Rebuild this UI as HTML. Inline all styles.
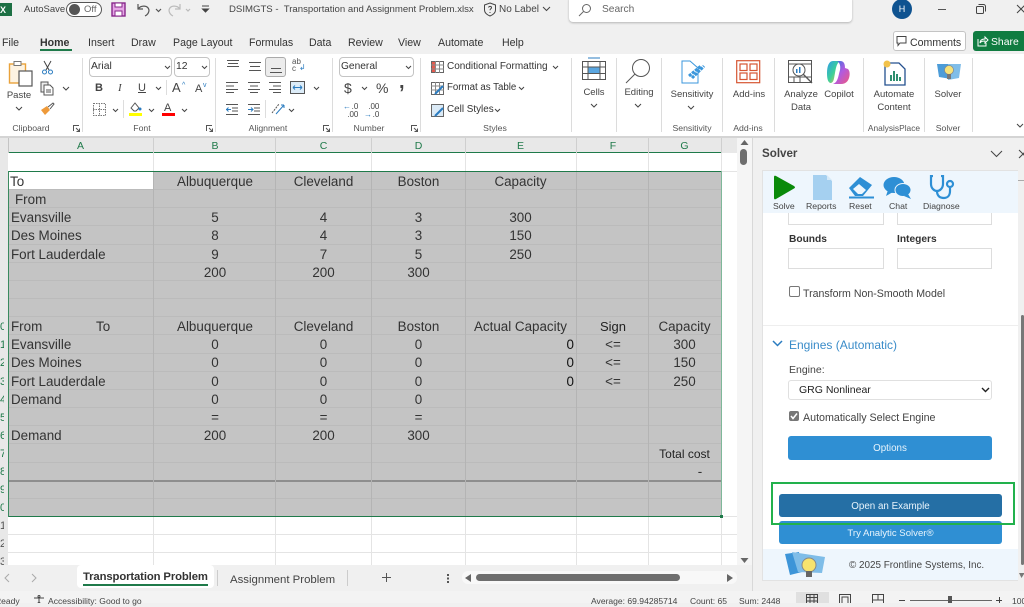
<!DOCTYPE html>
<html><head><meta charset="utf-8"><style>
html,body{margin:0;padding:0}
body{width:1024px;height:603px;overflow:hidden;position:relative;background:#f0f0f0;font-family:"Liberation Sans",sans-serif;color:#3a3a3a}
div,span,svg{position:absolute}
.t{white-space:nowrap;line-height:14px}
.rb{font-size:9.5px;color:#444;text-align:center;white-space:nowrap;line-height:12px}
.gl{font-size:8.7px;color:#555;text-align:center;white-space:nowrap;line-height:11px;top:123px}
.tab{font-size:10.6px;top:36px;line-height:14px;white-space:nowrap;color:#333}
.sep{top:58px;height:74px;width:1px;background:#dcdcdc}
.h{height:1px;left:8px;width:729px;background:#e4e4e4}
.v{top:153px;height:412px;width:1px;background:#e4e4e4}
.hg{height:1px;left:8px;width:713px;background:#bbb}
.vg{top:171px;height:345px;width:1px;background:#b4b4b4}
.r{left:0;width:737px;height:18px;line-height:18px;font-size:13.4px;color:#333;white-space:nowrap}
.r span{top:1px;text-align:center;height:18px}
.A{left:11px;text-align:left!important}
.B{left:154px;width:122px}.C{left:275px;width:97px}.D{left:372px;width:93px}.E{left:465px;width:111px}.F{left:577px;width:72px}.G{left:648px;width:73px}
.n{left:0;width:3.500px;height:18px;line-height:18px;margin-top:1px;font-size:11px;text-align:right;color:#1f7a4a;overflow:hidden}
.in{border:1px solid #ddd;background:#fff;box-sizing:border-box}
.st{top:595px;font-size:8.55px;color:#444;white-space:nowrap;line-height:12px}
</style></head><body>

<!-- Title bar -->
<svg style="left:0;top:3px" width="12" height="13"><rect x="0" y="0" width="12" height="13" fill="#1d7044"/><text x="0" y="10" font-size="9" font-weight="bold" fill="#fff" font-family="Liberation Sans">X</text></svg>
<div class="t" style="left:24px;top:3px;font-size:9.500px;color:#444">AutoSave</div>
<div style="left:66px;top:2px;width:36px;height:15px;border:1px solid #555;border-radius:9px;background:#fff;box-sizing:border-box"></div>
<div style="left:69px;top:4px;width:11px;height:11px;border-radius:50%;background:#555"></div>
<div class="t" style="left:84px;top:3px;font-size:9.500px;color:#666">Off</div>
<svg style="left:111px;top:2px" width="15" height="15"><rect x="1" y="1" width="13" height="13" fill="#e6a6e6" stroke="#86278a" stroke-width="1.400"/><rect x="4" y="1" width="7" height="4" fill="#fff" stroke="#86278a"/><rect x="4" y="9" width="7" height="5" fill="#fff" stroke="#86278a"/></svg>
<svg style="left:136px;top:2px" width="26" height="15" fill="none" stroke="#555" stroke-width="1.200"><path d="M2 2v5h5M2 7c3-4 10-4 11 1 0 3-2 5-4 6"/><path d="M20 7l2.500 2.500 2.500-2.500"/></svg>
<svg style="left:167px;top:2px" width="26" height="15" fill="none" stroke="#bbb" stroke-width="1.200"><path d="M13 2v5h-5M13 7c-3-4-10-4-11 1 0 3 2 5 4 6"/><path d="M19 7l2 2 2-2"/></svg>
<svg style="left:201px;top:5px" width="9" height="9" fill="none" stroke="#444"><path d="M1 1h7"/><path d="M1.500 4h6l-3 3z" fill="#444"/></svg>
<div class="t" style="left:229px;top:3px;font-size:9.600px;color:#444;white-space:pre">DSIMGTS -  Transportation and Assignment Problem.xlsx</div>
<svg style="left:483px;top:2px" width="14" height="15" fill="none" stroke="#444"><path d="M7 1l5.500 2v5c0 3-3 5-5.500 6-2.500-1-5.500-3-5.500-6V3z"/><path d="M5.500 5.500c.5-1.500 3-1.500 3 .2 0 1-1.500 1.200-1.500 2.500M7 10v1"/></svg>
<div class="t" style="left:499px;top:3px;font-size:10px;color:#444">No Label</div>
<svg style="left:542px;top:6px" width="9" height="7" fill="none" stroke="#444"><path d="M1 1l3.500 3.500L8 1"/></svg>
<div style="left:569px;top:-4px;width:283px;height:26px;background:#fff;border-radius:4px;box-shadow:0 1px 2px rgba(0,0,0,.25)"></div>
<svg style="left:578px;top:3px" width="14" height="14" fill="none" stroke="#666"><circle cx="8.500" cy="5.500" r="4"/><path d="M5.500 8.500l-4.500 4.500"/></svg>
<div class="t" style="left:602px;top:3px;font-size:10.200px;color:#666">Search</div>
<div style="left:892px;top:-1px;width:20px;height:20px;border-radius:50%;background:#0f5390;color:#fff;font-size:9px;text-align:center;line-height:20px">H</div>
<div style="left:938px;top:9px;width:8px;height:1px;background:#555"></div>
<svg style="left:976px;top:4px" width="10" height="10" fill="none" stroke="#444"><rect x=".5" y="2.500" width="7" height="7" rx="1"/><path d="M2.500 .5h5a2 2 0 0 1 2 2v5"/></svg>
<svg style="left:1016px;top:4px" width="8" height="10" fill="none" stroke="#444"><path d="M1 1l8 8M9 1l-8 8"/></svg>

<!-- Tabs -->
<div class="tab" style="left:2px">File</div>
<div class="tab" style="left:40px;font-weight:bold;color:#333">Home</div>
<div style="left:40px;top:49px;width:32px;height:2px;background:#1f7a4a"></div>
<div class="tab" style="left:88px">Insert</div>
<div class="tab" style="left:131px">Draw</div>
<div class="tab" style="left:173px">Page Layout</div>
<div class="tab" style="left:249px">Formulas</div>
<div class="tab" style="left:309px">Data</div>
<div class="tab" style="left:348px">Review</div>
<div class="tab" style="left:398px">View</div>
<div class="tab" style="left:438px">Automate</div>
<div class="tab" style="left:502px">Help</div>
<div style="left:893px;top:31px;width:73px;height:20px;background:#fff;border:1px solid #c4c4c4;border-radius:3px;box-sizing:border-box"></div>
<svg style="left:896px;top:35px" width="12" height="12" fill="none" stroke="#444"><path d="M1 1.500h9v6.500h-6l-2 2.500v-2.500h-1z"/></svg>
<div class="t" style="left:910px;top:36px;font-size:10.600px;color:#333">Comments</div>
<div style="left:973px;top:31px;width:60px;height:20px;background:#107c41;border-radius:3px"></div>
<svg style="left:977px;top:35px" width="12" height="12" fill="none" stroke="#fff"><path d="M1 4v7h8V8M3 8c0-3 2-4 5-4V2l3 3-3 3V6C6 6 4 6 3 8z"/></svg>
<div class="t" style="left:991px;top:36px;font-size:10.400px;color:#fff">Share</div>

<!-- Ribbon -->
<div style="left:0;top:54px;width:1024px;height:82px;background:#fff"></div>
<div style="left:0;top:136px;width:1024px;height:2px;background:#d4d4d4"></div>
<div class="sep" style="left:82px"></div><div class="sep" style="left:215px"></div><div class="sep" style="left:332px"></div><div class="sep" style="left:420px"></div><div class="sep" style="left:571px"></div><div class="sep" style="left:616px"></div><div class="sep" style="left:661px"></div><div class="sep" style="left:722px"></div><div class="sep" style="left:774px"></div><div class="sep" style="left:863px"></div><div class="sep" style="left:924px"></div><div class="sep" style="left:972px"></div>

<!-- Clipboard -->
<svg style="left:8px;top:60px" width="26" height="28"><rect x="1.500" y="4" width="16" height="19" fill="#fdf3e2" stroke="#e9a23b" stroke-width="1.400"/><rect x="6" y="1.500" width="7" height="4" fill="#fff" stroke="#777"/><rect x="11" y="11" width="13" height="15" fill="#fff" stroke="#555" stroke-width="1.200"/></svg>
<div class="rb" style="left:4px;top:90px;width:30px">Paste</div>
<svg style="left:15px;top:106px" width="8" height="6" fill="none" stroke="#444"><path d="M1 1l3 3 3-3"/></svg>
<svg style="left:41px;top:60px" width="13" height="15" fill="none" stroke="#444"><path d="M3 1l5 9M10 1L5 10"/><circle cx="3.500" cy="12" r="2" stroke="#2b7cc0"/><circle cx="9.500" cy="12" r="2" stroke="#2b7cc0"/></svg>
<svg style="left:40px;top:81px" width="15" height="15" fill="none" stroke="#555"><rect x="1" y="1" width="7" height="10" fill="#eee"/><path d="M4 4h6l3 3v7H4z" fill="#fff"/><path d="M6 9h5M6 11h5"/></svg>
<svg style="left:62px;top:86px" width="8" height="6" fill="none" stroke="#444"><path d="M1 1l3 3 3-3"/></svg>
<svg style="left:40px;top:102px" width="15" height="14"><path d="M1 8l6-4 3 4-5 5z" fill="#ee9a3a"/><path d="M8 5l5-4 1 1-4 5" fill="none" stroke="#555"/></svg>
<div class="gl" style="left:8px;width:46px">Clipboard</div>
<svg style="left:73px;top:125px" width="7" height="7" fill="none" stroke="#555"><path d="M.5 6V.5H6M3 3l3.500 3.500M6.500 3.500v3h-3"/></svg>

<!-- Font -->
<div style="left:89px;top:57px;width:83px;height:20px;border:1px solid #c4c4c4;border-radius:4px;box-sizing:border-box"></div>
<div class="t" style="left:91px;top:60px;font-size:10.400px;color:#333">Arial</div>
<svg style="left:164px;top:65px" width="7" height="5" fill="none" stroke="#444"><path d="M1 1l2.500 2.500L6 1"/></svg>
<div style="left:174px;top:57px;width:36px;height:20px;border:1px solid #c4c4c4;border-radius:4px;box-sizing:border-box"></div>
<div class="t" style="left:176px;top:60px;font-size:10.400px;color:#333">12</div>
<svg style="left:201px;top:65px" width="7" height="5" fill="none" stroke="#444"><path d="M1 1l2.500 2.500L6 1"/></svg>
<div class="t" style="left:95px;top:81px;font-size:11px;font-weight:bold;color:#444">B</div>
<div class="t" style="left:118px;top:81px;font-size:11px;font-family:'Liberation Serif',serif;font-style:italic;color:#444">I</div>
<div class="t" style="left:138px;top:81px;font-size:11px;text-decoration:underline;color:#444">U</div>
<svg style="left:155px;top:86px" width="7" height="5" fill="none" stroke="#444"><path d="M1 1l2.500 2.500L6 1"/></svg>
<div style="left:166px;top:80px;width:1px;height:15px;background:#ddd"></div>
<div class="t" style="left:172px;top:81px;font-size:13px;color:#444">A</div><div class="t" style="left:182px;top:79px;font-size:7px;color:#2b7cc0">^</div>
<div class="t" style="left:195px;top:82px;font-size:11px;color:#444">A</div><div class="t" style="left:203px;top:79px;font-size:7px;color:#2b7cc0">v</div>
<svg style="left:93px;top:103px" width="13" height="13" fill="none" stroke="#777" stroke-dasharray="1.500 1"><rect x=".5" y=".5" width="12" height="12"/><path d="M6.500 0v13M0 6.500h13"/></svg>
<svg style="left:112px;top:108px" width="7" height="5" fill="none" stroke="#444"><path d="M1 1l2.500 2.500L6 1"/></svg>
<div style="left:123px;top:100px;width:1px;height:18px;background:#ddd"></div>
<svg style="left:129px;top:102px" width="13" height="10" fill="none" stroke="#555"><path d="M2 6l4-5 4 5-3 3H5z"/><circle cx="11" cy="7" r="1.500" fill="#2b7cc0" stroke="none"/></svg>
<div style="left:129px;top:113px;width:13px;height:3px;background:#ffff00"></div>
<svg style="left:148px;top:108px" width="7" height="5" fill="none" stroke="#444"><path d="M1 1l2.500 2.500L6 1"/></svg>
<div class="t" style="left:164px;top:101px;font-size:11px;color:#444">A</div>
<div style="left:162px;top:113px;width:13px;height:3px;background:#f00"></div>
<svg style="left:181px;top:108px" width="7" height="5" fill="none" stroke="#444"><path d="M1 1l2.500 2.500L6 1"/></svg>
<div class="gl" style="left:122px;width:40px">Font</div>
<svg style="left:206px;top:125px" width="7" height="7" fill="none" stroke="#555"><path d="M.5 6V.5H6M3 3l3.500 3.500M6.500 3.500v3h-3"/></svg>

<!-- Alignment -->
<svg style="left:225px;top:58px" width="16" height="12" stroke="#555" fill="none"><path d="M2 2.500h12M3 5.500h10M2 8.500h12"/></svg>
<svg style="left:247px;top:60px" width="16" height="12" stroke="#555" fill="none"><path d="M2 2.500h12M3 6.500h10M2 10.500h12"/></svg>
<div style="left:265px;top:57px;width:21px;height:20px;background:#ececec;border:1px solid #aaa;border-radius:3px;box-sizing:border-box"></div>
<svg style="left:268px;top:64px" width="16" height="12" stroke="#555" fill="none"><path d="M3 4.500h10M2 8.500h12"/></svg>
<div class="t" style="left:292px;top:58px;font-size:8px;line-height:7px;color:#555">ab<br>c<span style="left:7px;top:6px;color:#2b7cc0">&#8626;</span></div>
<svg style="left:226px;top:80px" width="13" height="14" stroke="#555" fill="none"><path d="M0 2.500h12M0 6h8M0 9.500h12M0 12.500h8"/></svg>
<svg style="left:248px;top:80px" width="13" height="14" stroke="#555" fill="none"><path d="M0 2.500h12M2 6h8M0 9.500h12M2 12.500h8"/></svg>
<svg style="left:269px;top:80px" width="13" height="14" stroke="#555" fill="none"><path d="M0 2.500h12M4 6h8M0 9.500h12M4 12.500h8"/></svg>
<svg style="left:290px;top:81px" width="15" height="13"><rect x=".5" y=".5" width="14" height="12" fill="#dcecf8" stroke="#555"/><path d="M3 6.500h9M3 6.500l2-2M3 6.500l2 2M12 6.500l-2-2M12 6.500l-2 2" stroke="#2b7cc0" fill="none"/></svg>
<svg style="left:313px;top:86px" width="7" height="5" fill="none" stroke="#444"><path d="M1 1l2.500 2.500L6 1"/></svg>
<svg style="left:226px;top:103px" width="13" height="13" stroke="#555" fill="none"><path d="M0 1.500h12M6 5h6M6 8h6M0 11.500h12"/><path d="M5 6.500H0M2.500 4.500l-2 2 2 2" stroke="#2b7cc0"/></svg>
<svg style="left:248px;top:103px" width="13" height="13" stroke="#555" fill="none"><path d="M0 1.500h12M6 5h6M6 8h6M0 11.500h12"/><path d="M0 6.500h5M3 4.500l2 2-2 2" stroke="#2b7cc0"/></svg>
<div style="left:265px;top:100px;width:1px;height:18px;background:#ddd"></div>
<svg style="left:271px;top:102px" width="14" height="14" fill="none"><path d="M1 11l7-9" stroke="#555" stroke-dasharray="2 1"/><path d="M5 12L13 3M13 3h-3M13 3v3" stroke="#2b7cc0"/></svg>
<svg style="left:288px;top:108px" width="7" height="5" fill="none" stroke="#444"><path d="M1 1l2.500 2.500L6 1"/></svg>
<div class="gl" style="left:240px;width:56px">Alignment</div>
<svg style="left:323px;top:125px" width="7" height="7" fill="none" stroke="#555"><path d="M.5 6V.5H6M3 3l3.500 3.500M6.500 3.500v3h-3"/></svg>

<!-- Number -->
<div style="left:339px;top:57px;width:75px;height:20px;border:1px solid #c4c4c4;border-radius:4px;box-sizing:border-box"></div>
<div class="t" style="left:341px;top:60px;font-size:10.200px;color:#333">General</div>
<svg style="left:405px;top:65px" width="7" height="5" fill="none" stroke="#444"><path d="M1 1l2.500 2.500L6 1"/></svg>
<div class="t" style="left:344px;top:81px;font-size:14px;color:#444">$</div>
<svg style="left:361px;top:86px" width="7" height="5" fill="none" stroke="#444"><path d="M1 1l2.500 2.500L6 1"/></svg>
<div class="t" style="left:376px;top:81px;font-size:14px;color:#444">%</div>
<div class="t" style="left:399px;top:75px;font-size:20px;font-weight:bold;color:#444">,</div>
<div class="t" style="left:345px;top:103px;font-size:8px;line-height:8px;color:#444;white-space:pre"><span style="color:#2b7cc0;left:-2px">&#8592;</span>   .0
 .00</div>
<div class="t" style="left:366px;top:103px;font-size:8px;line-height:8px;color:#444;white-space:pre"> .00
<span style="color:#2b7cc0;left:-2px">&#8594;</span>   .0</div>
<div class="gl" style="left:349px;width:40px">Number</div>
<svg style="left:411px;top:125px" width="7" height="7" fill="none" stroke="#555"><path d="M.5 6V.5H6M3 3l3.500 3.500M6.500 3.500v3h-3"/></svg>

<!-- Styles -->
<svg style="left:431px;top:61px" width="13" height="12"><rect x=".5" y=".5" width="12" height="11" fill="#fff" stroke="#666"/><rect x="1" y="1" width="3" height="10" fill="#e35b4f"/><path d="M0 4h13M0 8h13M4.500 0v12M8.500 0v12" stroke="#888"/></svg>
<div class="t" style="left:447px;top:60px;font-size:10px;color:#333">Conditional Formatting</div>
<svg style="left:552px;top:65px" width="7" height="5" fill="none" stroke="#444"><path d="M1 1l2.500 2.500L6 1"/></svg>
<svg style="left:431px;top:82px" width="13" height="13"><rect x=".5" y=".5" width="12" height="12" fill="#fff" stroke="#666"/><path d="M0 4h13M0 8h13M4.500 0v12M8.500 0v12" stroke="#888"/><path d="M4 12l8-8" stroke="#2b7cc0" stroke-width="2"/></svg>
<div class="t" style="left:447px;top:81px;font-size:9.700px;color:#333">Format as Table</div>
<svg style="left:518px;top:86px" width="7" height="5" fill="none" stroke="#444"><path d="M1 1l2.500 2.500L6 1"/></svg>
<svg style="left:431px;top:104px" width="13" height="13"><rect x=".5" y=".5" width="12" height="12" fill="#dbeaf6" stroke="#666"/><path d="M4 12l8-8" stroke="#2b7cc0" stroke-width="2"/></svg>
<div class="t" style="left:447px;top:103px;font-size:9.900px;color:#333">Cell Styles</div>
<svg style="left:494px;top:108px" width="7" height="5" fill="none" stroke="#444"><path d="M1 1l2.500 2.500L6 1"/></svg>
<div class="gl" style="left:475px;width:40px">Styles</div>

<!-- Cells etc -->
<svg style="left:582px;top:57px" width="24" height="24" fill="none" stroke="#555"><path d="M6 1h12" stroke="#2b7cc0"/><rect x=".5" y="4.500" width="23" height="18"/><rect x="6" y="10" width="12" height="7" fill="#5aa6e0" stroke="none"/><path d="M0 10h24M0 16.500h24M6 4v19M18 4v19"/></svg>
<div class="rb" style="left:576px;top:87px;width:36px">Cells</div>
<svg style="left:590px;top:103px" width="8" height="6" fill="none" stroke="#444"><path d="M1 1l3 3 3-3"/></svg>
<svg style="left:625px;top:58px" width="27" height="26" fill="none" stroke="#555"><circle cx="16" cy="10" r="8.500"/><path d="M10 16L1 25"/></svg>
<div class="rb" style="left:620px;top:87px;width:38px">Editing</div>
<svg style="left:634px;top:103px" width="8" height="6" fill="none" stroke="#444"><path d="M1 1l3 3 3-3"/></svg>
<svg style="left:681px;top:59px" width="25" height="25" fill="none"><path d="M1 2h8l8 7v15H1z" fill="#fff" stroke="#3b97dc"/><path d="M8 17l12-10M11 19l12-12" stroke="#3b97dc" stroke-width="3" stroke-dasharray="3 1"/></svg>
<div class="rb" style="left:668px;top:89px;width:48px">Sensitivity</div>
<svg style="left:687px;top:105px" width="8" height="6" fill="none" stroke="#444"><path d="M1 1l3 3 3-3"/></svg>
<div class="gl" style="left:668px;width:48px">Sensitivity</div>
<svg style="left:736px;top:60px" width="25" height="24" fill="none" stroke="#d65532" stroke-width="1.200"><rect x=".7" y=".7" width="23" height="22"/><rect x="4" y="4" width="7" height="6.500"/><rect x="14" y="4" width="7" height="6.500"/><rect x="4" y="13" width="7" height="6.500"/><rect x="14" y="13" width="7" height="6.500"/></svg>
<div class="rb" style="left:725px;top:89px;width:48px">Add-ins</div>
<div class="gl" style="left:725px;width:46px">Add-ins</div>
<svg style="left:788px;top:60px" width="25" height="24" fill="none" stroke="#555"><rect x=".5" y=".5" width="23" height="22"/><path d="M0 4h24M0 17h24M6 17v6M12 17v6"/><circle cx="11" cy="10" r="6"/><rect x="8" y="9" width="1.500" height="4" fill="#2b7cc0" stroke="none"/><rect x="11" y="7" width="1.500" height="6" fill="#2b7cc0" stroke="none"/><path d="M15 14l9 9" stroke-width="1.300"/></svg>
<div class="rb" style="left:777px;top:88px;width:48px;line-height:13px">Analyze<br>Data</div>
<svg style="left:826px;top:60px" width="25" height="25"><defs><linearGradient id="g1" x1="0" y1="0" x2="1" y2="1"><stop offset="0" stop-color="#2f9ce8"/><stop offset=".5" stop-color="#3ccf9a"/><stop offset="1" stop-color="#f4c53f"/></linearGradient><linearGradient id="g2" x1="0" y1="0" x2="1" y2="1"><stop offset="0" stop-color="#1d78e0"/><stop offset=".5" stop-color="#b15be0"/><stop offset="1" stop-color="#f0587d"/></linearGradient></defs><path d="M7 1h7c-3 2-4 6-5 12-1 5-1 9-4 10-3 0-4-4-4-10 0-7 2-12 6-12z" fill="url(#g1)"/><path d="M11 1h3c4 0 5 3 5 7l3 1c2 2 2 6 1 9-1 3-3 6-8 6H7c5-2 5-7 7-14 1-5-1-8-3-9z" fill="url(#g2)"/></svg>
<div class="rb" style="left:820px;top:89px;width:38px">Copilot</div>
<svg style="left:883px;top:59px" width="23" height="27" fill="none"><path d="M5 4h11l6 6v16H2V6" fill="#fff" stroke="#24508f" stroke-width="1.300"/><circle cx="4" cy="5" r="3.500" fill="#f2c24b"/><rect x="7" y="16" width="2" height="6" fill="#2f8f6f"/><rect x="10" y="12" width="2" height="10" fill="#2f8f6f"/><rect x="13" y="15" width="2" height="7" fill="#2f8f6f"/><rect x="16" y="18" width="2" height="4" fill="#2f8f6f"/></svg>
<div class="rb" style="left:868px;top:88px;width:52px;line-height:13px">Automate<br>Content</div>
<div class="gl" style="left:865px;width:58px;font-size:8.400px">AnalysisPlace</div>
<svg style="left:936px;top:62px" width="25" height="19"><path d="M1 2l14 0 0 15-12-2z" fill="#4c9cd8"/><path d="M12 2l13 0-2 14-11 2z" fill="#7fbde8"/><circle cx="13" cy="8" r="4.500" fill="#f5e27a" stroke="#888" stroke-width=".7"/><rect x="11" y="12" width="4" height="5" fill="#777"/></svg>
<div class="rb" style="left:930px;top:89px;width:36px">Solver</div>
<div class="gl" style="left:930px;width:36px">Solver</div>
<svg style="left:1016px;top:123px" width="8" height="6" fill="none" stroke="#444"><path d="M1 1l3 3 3-3"/></svg>

<!-- Sheet -->
<div style="left:0;top:138px;width:737px;height:427px;background:#fff"></div>
<div style="left:0;top:138px;width:737px;height:15px;background:#e8e8e8"></div>
<div style="left:0;top:138px;width:8px;height:427px;background:#e8e8e8"></div>
<div style="left:8px;top:152px;width:713px;height:1px;background:#1f7a4a"></div>
<div style="left:8px;top:138px;width:1px;height:15px;background:#c4c4c4"></div>
<div style="left:153px;top:138px;width:1px;height:15px;background:#cfcfcf"></div>
<div style="left:275px;top:138px;width:1px;height:15px;background:#cfcfcf"></div>
<div style="left:371px;top:138px;width:1px;height:15px;background:#cfcfcf"></div>
<div style="left:465px;top:138px;width:1px;height:15px;background:#cfcfcf"></div>
<div style="left:576px;top:138px;width:1px;height:15px;background:#cfcfcf"></div>
<div style="left:648px;top:138px;width:1px;height:15px;background:#cfcfcf"></div>
<div style="left:721px;top:138px;width:1px;height:15px;background:#cfcfcf"></div>
<div class="r" style="top:137px;height:16px;line-height:16px;font-size:10.500px;color:#1f7a4a"><span class="B" style="left:8px;width:145px">A</span><span class="B">B</span><span class="C">C</span><span class="D">D</span><span class="E">E</span><span class="F">F</span><span class="G">G</span></div>

<div class="h" style="top:171px"></div><div class="h" style="top:516px"></div><div class="h" style="top:534px"></div><div class="h" style="top:552px"></div>
<div class="v" style="left:153px"></div><div class="v" style="left:275px"></div><div class="v" style="left:371px"></div><div class="v" style="left:465px"></div><div class="v" style="left:576px"></div><div class="v" style="left:648px"></div><div class="v" style="left:721px"></div>

<!-- Selection -->
<div style="left:8px;top:171px;width:713px;height:345px;background:#c4c4c4"></div>
<div style="left:9px;top:172px;width:144px;height:17px;background:#fff"></div>
<div class="hg" style="top:189px"></div><div class="hg" style="top:207px"></div><div class="hg" style="top:225px"></div><div class="hg" style="top:244px"></div><div class="hg" style="top:262px"></div><div class="hg" style="top:280px"></div><div class="hg" style="top:298px"></div><div class="hg" style="top:316px"></div><div class="hg" style="top:334px"></div><div class="hg" style="top:353px"></div><div class="hg" style="top:371px"></div><div class="hg" style="top:389px"></div><div class="hg" style="top:407px"></div><div class="hg" style="top:425px"></div><div class="hg" style="top:443px"></div><div class="hg" style="top:462px"></div><div class="hg" style="top:498px"></div>
<div class="hg" style="top:480px;height:2px;background:#8e8e8e"></div>
<div class="vg" style="left:153px"></div><div class="vg" style="left:275px"></div><div class="vg" style="left:371px"></div><div class="vg" style="left:465px"></div><div class="vg" style="left:576px"></div><div class="vg" style="left:648px"></div>
<div style="left:8px;top:171px;width:714px;height:1px;background:#1f7a4a"></div>
<div style="left:8px;top:516px;width:714px;height:1px;background:#1f7a4a"></div>
<div style="left:8px;top:171px;width:1px;height:346px;background:#3a8a5f"></div>
<div style="left:721px;top:171px;width:1px;height:346px;background:#7fb89a"></div>
<div style="left:720px;top:515px;width:3px;height:3px;background:#1f7a4a"></div>

<div class="r" style="top:172px"><span class="A" style="left:10px">To</span><span class="B">Albuquerque</span><span class="C">Cleveland</span><span class="D">Boston</span><span class="E">Capacity</span></div>
<div class="r" style="top:190px"><span class="A" style="left:15px">From</span></div>
<div class="r" style="top:208px"><span class="A">Evansville</span><span class="B">5</span><span class="C">4</span><span class="D">3</span><span class="E">300</span></div>
<div class="r" style="top:226px"><span class="A">Des Moines</span><span class="B">8</span><span class="C">4</span><span class="D">3</span><span class="E">150</span></div>
<div class="r" style="top:245px"><span class="A">Fort Lauderdale</span><span class="B">9</span><span class="C">7</span><span class="D">5</span><span class="E">250</span></div>
<div class="r" style="top:263px"><span class="B">200</span><span class="C">200</span><span class="D">300</span></div>
<div class="r" style="top:317px"><span class="A">From</span><span class="A" style="left:96px">To</span><span class="B">Albuquerque</span><span class="C">Cleveland</span><span class="D">Boston</span><span class="E">Actual Capacity</span><span class="F" style="font-size:13px;color:#222">Sign</span><span class="G">Capacity</span></div>
<div class="r" style="top:335px"><span class="A">Evansville</span><span class="B">0</span><span class="C">0</span><span class="D">0</span><span class="E" style="text-align:right;width:109px;color:#111">0</span><span class="F">&lt;=</span><span class="G">300</span></div>
<div class="r" style="top:353px"><span class="A">Des Moines</span><span class="B">0</span><span class="C">0</span><span class="D">0</span><span class="E" style="text-align:right;width:109px;color:#111">0</span><span class="F">&lt;=</span><span class="G">150</span></div>
<div class="r" style="top:372px"><span class="A">Fort Lauderdale</span><span class="B">0</span><span class="C">0</span><span class="D">0</span><span class="E" style="text-align:right;width:109px;color:#111">0</span><span class="F">&lt;=</span><span class="G">250</span></div>
<div class="r" style="top:390px"><span class="A">Demand</span><span class="B">0</span><span class="C">0</span><span class="D">0</span></div>
<div class="r" style="top:408px"><span class="B">=</span><span class="C">=</span><span class="D">=</span></div>
<div class="r" style="top:426px"><span class="A">Demand</span><span class="B">200</span><span class="C">200</span><span class="D">300</span></div>
<div class="r" style="top:444px"><span class="G" style="font-size:12px;color:#222">Total cost</span></div>
<div class="r" style="top:462px"><span class="G" style="left:697px;width:6px">-</span></div>

<div class="n" style="top:317px">0</div><div class="n" style="top:335px">1</div><div class="n" style="top:353px">2</div><div class="n" style="top:372px">3</div><div class="n" style="top:390px">4</div><div class="n" style="top:408px">5</div><div class="n" style="top:426px">6</div><div class="n" style="top:444px">7</div><div class="n" style="top:462px">8</div><div class="n" style="top:480px">9</div><div class="n" style="top:498px">0</div><div class="n" style="top:516px;color:#555">1</div><div class="n" style="top:534px;color:#555">2</div><div class="n" style="top:552px;height:12px;color:#555">3</div>

<!-- V scrollbar -->
<div style="left:737px;top:138px;width:15px;height:427px;background:#f5f5f5"></div>
<svg style="left:740px;top:140px" width="9" height="6"><path d="M4.500 0l4 5h-8z" fill="#666"/></svg>
<div style="left:740px;top:149px;width:7px;height:16px;background:#6e6e6e;border-radius:4px"></div>
<svg style="left:740px;top:557px" width="9" height="6"><path d="M4.500 6l4-5h-8z" fill="#666"/></svg>

<!-- Sheet tabs -->
<div style="left:0;top:565px;width:752px;height:26px;background:#f0f0f0"></div>
<svg style="left:3px;top:572px" width="36" height="12" fill="none" stroke="#aaa"><path d="M6 2L2 6l4 4M29 2l4 4-4 4"/></svg>
<div style="left:77px;top:565px;width:137px;height:23px;background:#fff;border-radius:4px"></div>
<div class="t" style="left:83px;top:570px;font-size:11.300px;font-weight:bold;color:#333;letter-spacing:-.12px">Transportation Problem</div>
<div style="left:83px;top:584px;width:125px;height:2px;background:#1f7a4a"></div>
<div class="t" style="left:230px;top:573px;font-size:11.400px;color:#444">Assignment Problem</div>
<div style="left:347px;top:570px;width:1px;height:16px;background:#ccc"></div>
<div style="left:217px;top:570px;width:1px;height:16px;background:#ccc"></div>
<svg style="left:381px;top:572px" width="11" height="11" stroke="#555" fill="none"><path d="M5.500 1v9M1 5.500h9"/></svg>
<svg style="left:446px;top:573px" width="4" height="11" fill="#555"><rect x="1" y="1" width="2" height="2"/><rect x="1" y="4.500" width="2" height="2"/><rect x="1" y="8" width="2" height="2"/></svg>
<div style="left:462px;top:571px;width:275px;height:13px;background:#f8f8f8;border-radius:6px"></div>
<svg style="left:465px;top:574px" width="6" height="8"><path d="M0 4l6-4v8z" fill="#666"/></svg>
<div style="left:476px;top:574px;width:204px;height:7px;background:#6e6e6e;border-radius:4px"></div>
<svg style="left:727px;top:574px" width="6" height="8"><path d="M6 4L0 0v8z" fill="#666"/></svg>

<!-- Status -->
<div style="left:0;top:591px;width:1024px;height:12px;background:#f3f3f3"></div>
<div class="st" style="left:-5px">Ready</div>
<svg style="left:33px;top:595px" width="12" height="8" fill="none" stroke="#444"><circle cx="6" cy="1.500" r="1"/><path d="M1 3h10M6 3v4M6 7l-3 3M6 7l3 3"/></svg>
<div class="st" style="left:48px">Accessibility: Good to go</div>
<div class="st" style="left:591px">Average: 69.94285714</div>
<div class="st" style="left:690px">Count: 65</div>
<div class="st" style="left:739px">Sum: 2448</div>
<div style="left:796px;top:592px;width:33px;height:11px;background:#e0e0e0"></div>
<svg style="left:806px;top:594px" width="12" height="9" fill="none" stroke="#444"><rect x=".5" y=".5" width="11" height="10"/><path d="M0 3.500h12M0 7h12M4 0v11M8 0v11"/></svg>
<svg style="left:839px;top:594px" width="12" height="9" fill="none" stroke="#444"><rect x=".5" y=".5" width="11" height="10"/><rect x="3" y="3" width="6" height="8"/></svg>
<svg style="left:872px;top:594px" width="12" height="9" fill="none" stroke="#444"><rect x=".5" y=".5" width="11" height="10"/><path d="M6 0v6M0 6h12"/></svg>
<div style="left:899px;top:600px;width:6px;height:1px;background:#444"></div>
<div style="left:910px;top:600px;width:82px;height:1px;background:#666"></div>
<div style="left:948px;top:596px;width:4px;height:7px;background:#555"></div>
<div style="left:996px;top:600px;width:6px;height:1px;background:#444"></div><div style="left:998.500px;top:597px;width:1px;height:6px;background:#444"></div>
<div class="st" style="left:1012px">100%</div>

<!-- Solver panel -->
<div style="left:752px;top:138px;width:1px;height:453px;background:#d8d8d8"></div>
<div style="left:753px;top:138px;width:271px;height:453px;background:#f0f0f0"></div>
<div class="t" style="left:762px;top:147px;font-size:11.600px;font-weight:bold;color:#444">Solver</div>
<svg style="left:990px;top:150px" width="13" height="8" fill="none" stroke="#444"><path d="M1 1l5.500 5.500L12 1"/></svg>
<svg style="left:1018px;top:149px" width="6" height="10" fill="none" stroke="#444"><path d="M1 1l8 8M9 1l-8 8"/></svg>
<div style="left:762px;top:170px;width:256px;height:411px;background:#fff;border:solid #e2e2e2;border-width:1px 0 1px 1px;box-sizing:border-box"></div>
<div style="left:763px;top:171px;width:255px;height:42px;background:#eef6fd"></div>
<svg style="left:773px;top:175px" width="23" height="25"><path d="M1 2q0-2 2-1l18 10q2 1.500 0 2.500L3 24q-2 1-2-1z" fill="#0a8a0a"/></svg>
<div class="t" style="left:773px;top:199px;font-size:8.700px;color:#444">Solve</div>
<svg style="left:813px;top:175px" width="20" height="25"><path d="M0 0h13l6 6v19H0z" fill="#a5d0f0"/><path d="M14 0l5 5h-5z" fill="#d5e9f8"/></svg>
<div class="t" style="left:806px;top:199px;font-size:8.700px;color:#444">Reports</div>
<svg style="left:848px;top:176px" width="27" height="23"><path d="M1 12L12 1l12 8-9 11H7z" fill="#2e8fd5"/><path d="M5 13l5 5h4l4-4-7-6z" fill="#eef6fd"/><path d="M1 21.500h25" stroke="#2e8fd5" stroke-width="2"/></svg>
<div class="t" style="left:849px;top:199px;font-size:8.700px;color:#444">Reset</div>
<svg style="left:883px;top:176px" width="30" height="24"><ellipse cx="11" cy="9" rx="10.500" ry="8" fill="#2e8fd5"/><path d="M5 14l-2 6 7-4z" fill="#2e8fd5"/><ellipse cx="20" cy="14" rx="8" ry="6.500" fill="#2e8fd5" stroke="#eef6fd"/><path d="M25 18l3 5-7-3z" fill="#2e8fd5"/></svg>
<div class="t" style="left:889px;top:199px;font-size:8.700px;color:#444">Chat</div>
<svg style="left:929px;top:175px" width="27" height="25" fill="none" stroke="#2e8fd5" stroke-width="2.200"><path d="M4 1H2v8c0 4 3 7 6 7s6-3 6-7V1h-2"/><path d="M8 16c0 5 3 7 7 7s6-3 6-7v-3"/><circle cx="21" cy="9" r="3"/></svg>
<div class="t" style="left:923px;top:199px;font-size:8.700px;color:#444">Diagnose</div>

<div class="in" style="left:788px;top:213px;width:96px;height:12px;border-top:0"></div>
<div class="in" style="left:897px;top:213px;width:95px;height:12px;border-top:0"></div>
<div class="t" style="left:789px;top:233px;font-size:10.200px;font-weight:bold;color:#333">Bounds</div>
<div class="t" style="left:897px;top:233px;font-size:10.200px;font-weight:bold;color:#333">Integers</div>
<div class="in" style="left:788px;top:248px;width:96px;height:21px"></div>
<div class="in" style="left:897px;top:248px;width:95px;height:21px"></div>
<div style="left:789px;top:286px;width:11px;height:11px;border:1px solid #777;border-radius:2px;box-sizing:border-box;background:#fff"></div>
<div class="t" style="left:803px;top:287px;font-size:10.600px;color:#444">Transform Non-Smooth Model</div>
<div style="left:763px;top:325px;width:255px;height:1px;background:#eee"></div>
<svg style="left:772px;top:340px" width="11" height="8" fill="none" stroke="#2b7cc0" stroke-width="1.500"><path d="M1 1l4.500 4.500L10 1"/></svg>
<div class="t" style="left:789px;top:338px;font-size:12px;color:#3a8cc9">Engines (Automatic)</div>
<div class="t" style="left:789px;top:363px;font-size:10.500px;color:#444">Engine:</div>
<div style="left:788px;top:380px;width:204px;height:20px;border:1px solid #e0e0e0;border-radius:3px;box-sizing:border-box"></div>
<div class="t" style="left:799px;top:383px;font-size:10.500px;color:#222">GRG Nonlinear</div>
<svg style="left:981px;top:387px" width="9" height="7" fill="none" stroke="#222" stroke-width="1.400"><path d="M1 1l3.500 3.500L8 1"/></svg>
<div style="left:789px;top:411px;width:10px;height:10px;background:#777;border-radius:2px"></div>
<svg style="left:789px;top:411px" width="10" height="10" fill="none" stroke="#fff" stroke-width="1.500"><path d="M2 5l2 2.500L8 2.500"/></svg>
<div class="t" style="left:803px;top:411px;font-size:10.700px;color:#444">Automatically Select Engine</div>
<div style="left:788px;top:436px;width:204px;height:24px;background:#2f8fd3;border-radius:3px;color:#e8f4fc;font-size:9.800px;text-align:center;line-height:26px">Options</div>
<div style="left:779px;top:494px;width:223px;height:23px;background:#256fa5;border-radius:3px;color:#e8f4fc;font-size:9.800px;text-align:center;line-height:25px">Open an Example</div>
<div style="left:779px;top:521px;width:223px;height:23px;background:#2f8fd3;border-radius:3px;color:#e8f4fc;font-size:9.600px;text-align:center;line-height:25px">Try Analytic Solver®</div>
<div style="left:771px;top:482px;width:244px;height:43px;border:2px solid #22b14c;box-sizing:border-box"></div>
<div style="left:763px;top:549px;width:255px;height:31px;background:#eef6fd"></div>
<svg style="left:784px;top:551px" width="44" height="28"><path d="M1 3l14-2 3 20-12 3z" fill="#3d95d8"/><path d="M8 1l33 5-3 16-24-1z" fill="#7fbde8"/><circle cx="25" cy="14" r="7" fill="#f7e36e" stroke="#888"/><rect x="22" y="20" width="6" height="6" fill="#666"/></svg>
<div class="t" style="left:849px;top:559px;font-size:9.900px;color:#444">© 2025 Frontline Systems, Inc.</div>
<div style="left:1018px;top:170px;width:6px;height:421px;background:#f0f0f0"></div>
<div style="left:1018px;top:180px;width:6px;height:1px;background:#aaa"></div>
<div style="left:1021px;top:315px;width:3px;height:250px;background:#777;border-radius:2px"></div>
<svg style="left:1019px;top:573px" width="5" height="5"><path d="M0 0h5v1L2.500 5z" fill="#777"/></svg>
</body></html>
